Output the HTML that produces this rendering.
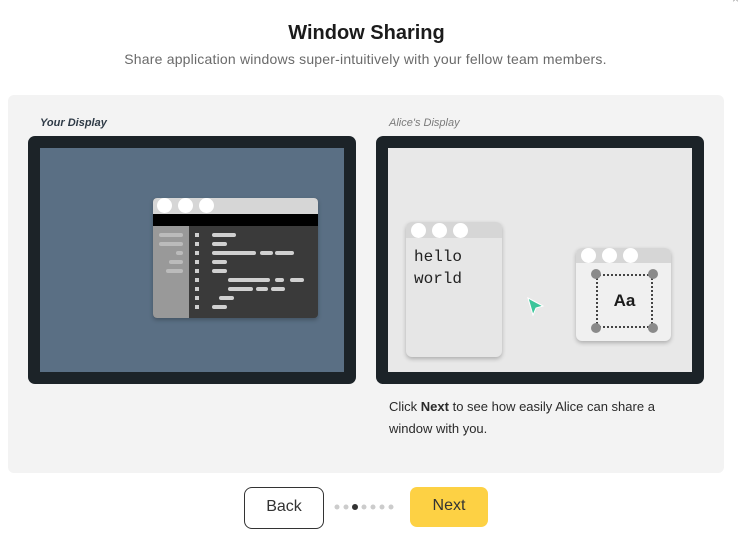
<!DOCTYPE html>
<html><head><style>
*{margin:0;padding:0;box-sizing:border-box}
body{width:741px;height:544px;background:#fff;position:relative;overflow:hidden;font-family:"Liberation Sans",sans-serif}
.a{position:absolute}
.b{position:absolute;background:#d0d0d0;height:4px;border-radius:2px}
.sq{position:absolute;background:#d0d0d0;width:4px;height:4px;left:195px}
.c{position:absolute;width:15px;height:15px;border-radius:50%;background:#fff}
.d{position:absolute;width:10px;height:10px;border-radius:50%;background:#8a8a8a}
</style></head><body>
<div class="a" style="left:0;top:22px;width:733px;text-align:center;font-size:20px;font-weight:bold;color:#1b1b1b">Window Sharing</div>
<div class="a" style="left:0;top:51px;width:731px;text-align:center;font-size:14px;color:#6a6a6a;letter-spacing:0.2px">Share application windows super-intuitively with your fellow team members.</div>
<div class="a" style="left:8px;top:95px;width:716px;height:378px;background:#f3f3f3;border-radius:6px"></div>
<div class="a" style="left:40px;top:117px;font-size:11px;font-style:italic;font-weight:bold;color:#2e3a46">Your Display</div>
<div class="a" style="left:389px;top:117px;font-size:11px;font-style:italic;color:#7a7a7a">Alice's Display</div>

<div class="a" style="left:28px;top:136px;width:328px;height:248px;background:#1c2328;border-radius:7px"></div>
<div class="a" style="left:40px;top:148px;width:304px;height:224px;background:#5a6f84"></div>
<div class="a" style="left:153px;top:198px;width:165px;height:120px;border-radius:4px;overflow:hidden;background:#3a3a3a;box-shadow:0 2px 4px rgba(0,0,0,.25)">
 <div class="a" style="left:0;top:0;width:165px;height:16px;background:#d6d6d6"></div>
 <div class="a" style="left:0;top:16px;width:165px;height:12px;background:#000"></div>
 <div class="a" style="left:0;top:28px;width:36px;height:92px;background:#999"></div>
</div>
<div class="c" style="left:157px;top:198px"></div><div class="c" style="left:178px;top:198px"></div><div class="c" style="left:199px;top:198px"></div>
<div class="b" style="left:159px;top:233px;width:24px;background:#bbb"></div>
<div class="b" style="left:159px;top:242px;width:24px;background:#bbb"></div>
<div class="b" style="left:176px;top:251px;width:7px;background:#bbb"></div>
<div class="b" style="left:169px;top:260px;width:14px;background:#bbb"></div>
<div class="b" style="left:166px;top:269px;width:17px;background:#bbb"></div>
<div class="sq" style="top:233px"></div><div class="sq" style="top:242px"></div><div class="sq" style="top:251px"></div><div class="sq" style="top:260px"></div><div class="sq" style="top:269px"></div><div class="sq" style="top:278px"></div><div class="sq" style="top:287px"></div><div class="sq" style="top:296px"></div><div class="sq" style="top:305px"></div>
<div class="b" style="left:212px;top:233px;width:24px"></div>
<div class="b" style="left:212px;top:242px;width:15px"></div>
<div class="b" style="left:212px;top:251px;width:44px"></div><div class="b" style="left:260px;top:251px;width:13px"></div><div class="b" style="left:275px;top:251px;width:19px"></div>
<div class="b" style="left:212px;top:260px;width:15px"></div>
<div class="b" style="left:212px;top:269px;width:15px"></div>
<div class="b" style="left:228px;top:278px;width:42px"></div><div class="b" style="left:275px;top:278px;width:9px"></div><div class="b" style="left:290px;top:278px;width:14px"></div>
<div class="b" style="left:228px;top:287px;width:25px"></div><div class="b" style="left:256px;top:287px;width:12px"></div><div class="b" style="left:271px;top:287px;width:14px"></div>
<div class="b" style="left:219px;top:296px;width:15px"></div>
<div class="b" style="left:212px;top:305px;width:15px"></div>

<div class="a" style="left:376px;top:136px;width:328px;height:248px;background:#1c2328;border-radius:7px"></div>
<div class="a" style="left:388px;top:148px;width:304px;height:224px;background:#e8e8e8"></div>
<div class="a" style="left:406px;top:222px;width:96px;height:135px;background:#e6e6e6;border-radius:6px;overflow:hidden;box-shadow:0 2px 4px rgba(0,0,0,.25)">
 <div class="a" style="left:0;top:0;width:96px;height:16px;background:#d6d6d6"></div>
</div>
<div class="c" style="left:411px;top:223px"></div><div class="c" style="left:432px;top:223px"></div><div class="c" style="left:453px;top:223px"></div>
<div class="a" style="left:414px;top:246px;font-family:'Liberation Mono',monospace;font-size:16px;line-height:22px;color:#222">hello<br>world</div>
<div class="a" style="left:576px;top:248px;width:95px;height:93px;background:#f0f0f0;border-radius:6px;overflow:hidden;box-shadow:0 2px 4px rgba(0,0,0,.25)">
 <div class="a" style="left:0;top:0;width:95px;height:15px;background:#d6d6d6"></div>
</div>
<div class="c" style="left:581px;top:248px"></div><div class="c" style="left:602px;top:248px"></div><div class="c" style="left:623px;top:248px"></div>
<div class="a" style="left:596px;top:274px;width:57px;height:54px;border:2px dotted #444"></div>
<div class="d" style="left:591px;top:269px"></div><div class="d" style="left:648px;top:269px"></div><div class="d" style="left:591px;top:323px"></div><div class="d" style="left:648px;top:323px"></div>
<div class="a" style="left:596px;top:291px;width:57px;text-align:center;font-size:17px;font-weight:bold;color:#1b1b1b">Aa</div>
<svg class="a" style="left:526px;top:296px" width="20" height="20"><path d="M2 2 L17 10 L10 12 L7 19 Z" fill="#3cc59b" stroke="#fff" stroke-width="1"/></svg>

<div class="a" style="left:389px;top:396px;font-size:13px;line-height:22px;color:#2a2a2a">Click <b>Next</b> to see how easily Alice can share a<br>window with you.</div>

<div class="a" style="left:244px;top:487px;width:80px;height:42px;border:1px solid #333;border-radius:8px;text-align:center;line-height:38px;font-size:16px;color:#333">Back</div>
<svg class="a" style="left:333px;top:503px" width="70" height="8">
<circle cx="4" cy="4" r="2.5" fill="#ccc"/><circle cx="13" cy="4" r="2.5" fill="#ccc"/><circle cx="22" cy="4" r="3" fill="#333"/><circle cx="31" cy="4" r="2.5" fill="#ccc"/><circle cx="40" cy="4" r="2.5" fill="#ccc"/><circle cx="49" cy="4" r="2.5" fill="#ccc"/><circle cx="58" cy="4" r="2.5" fill="#ccc"/></svg>
<div class="a" style="left:410px;top:487px;width:78px;height:40px;background:#fdd144;border-radius:7px;text-align:center;line-height:38px;font-size:16px;color:#333">Next</div>
<div class="a" style="left:732px;top:-8px;font-size:12px;color:#aaa">×</div>
</body></html>
